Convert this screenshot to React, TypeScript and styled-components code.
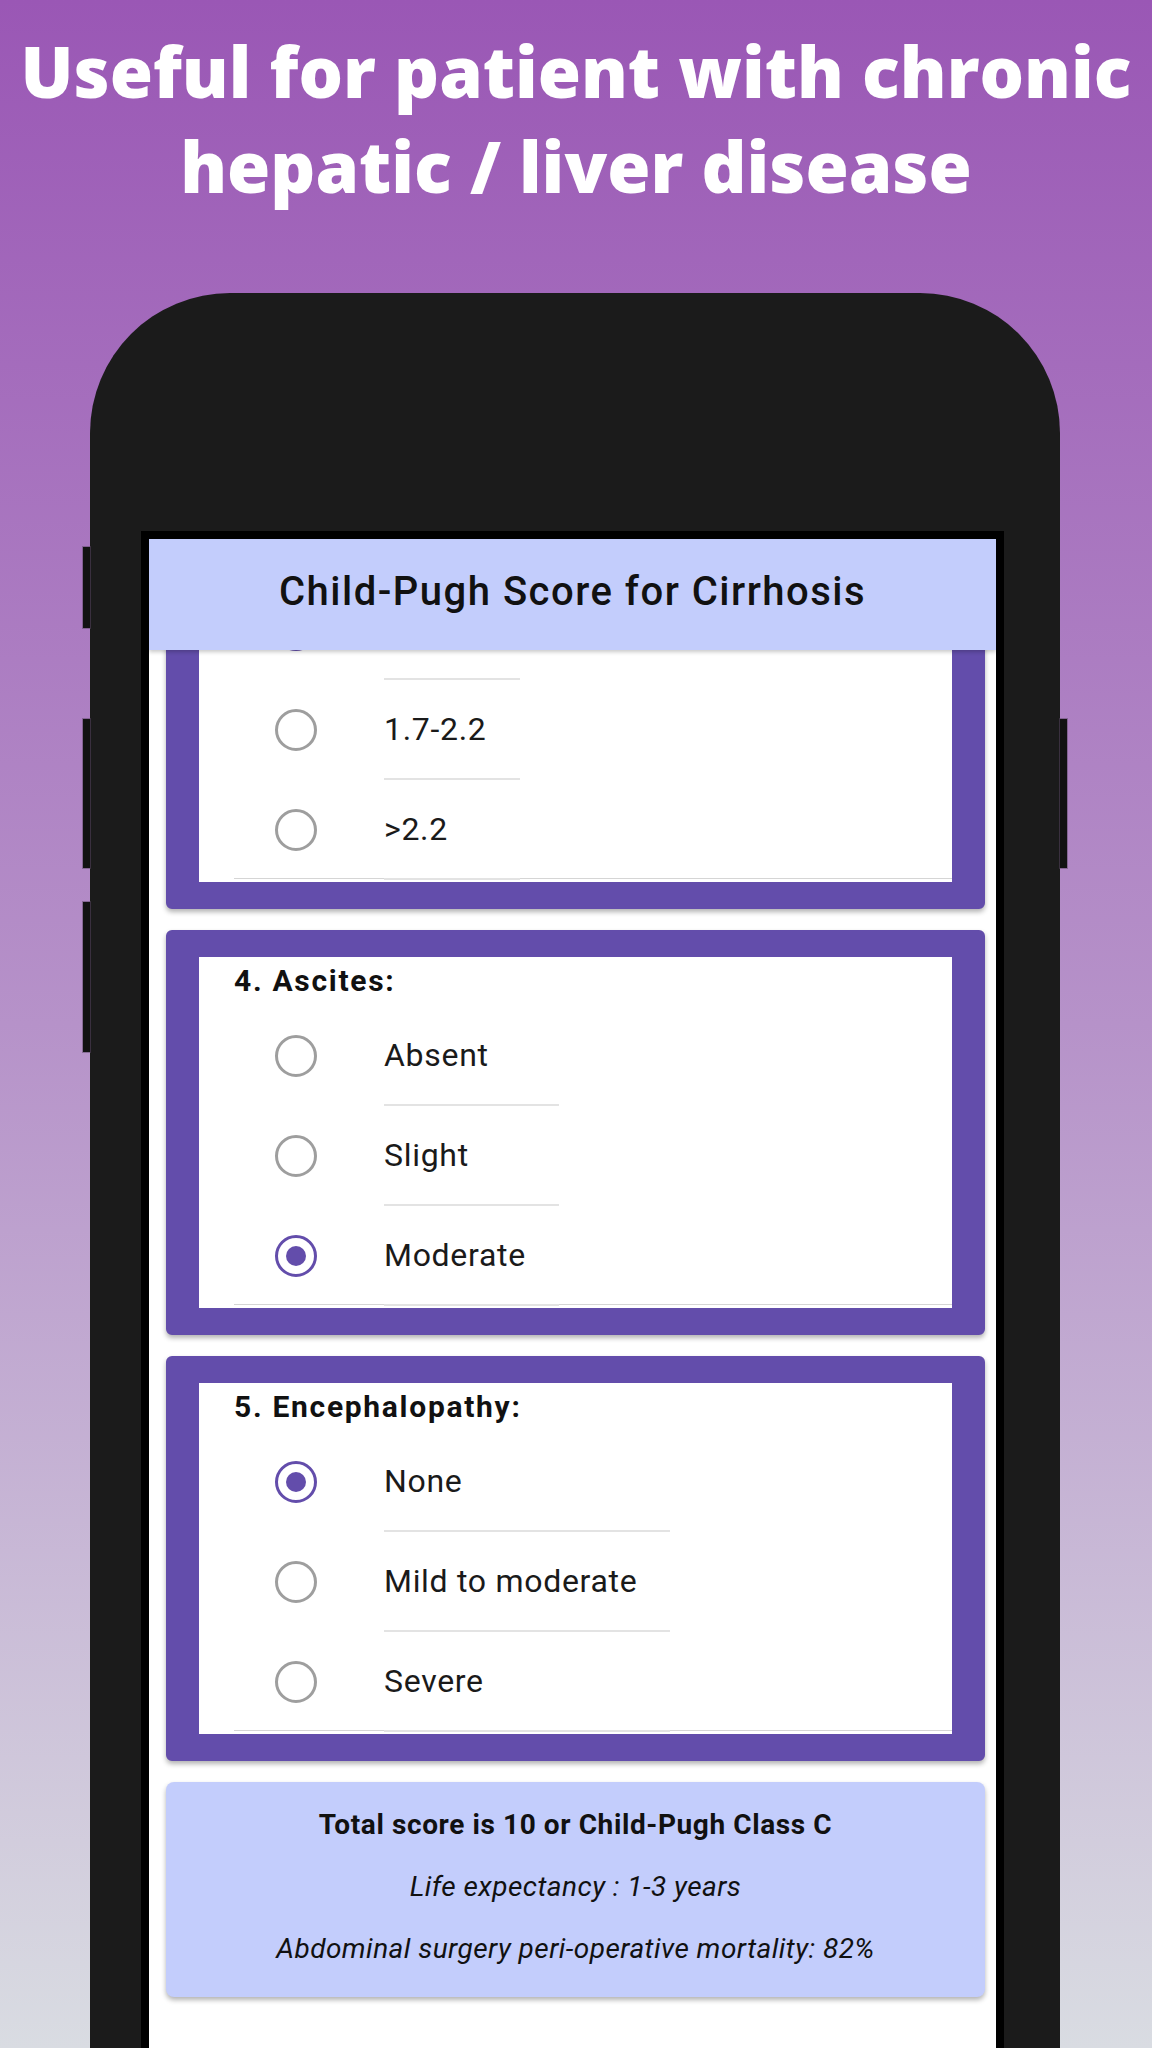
import React from 'react';
import styled, { createGlobalStyle } from 'styled-components';

const GlobalStyle = createGlobalStyle`
  html, body {
    margin: 0;
    padding: 0;
  }
  body {
    font-family: Roboto, "Noto Sans", Arial, sans-serif;
  }
`;

const Page = styled.div`
  width: 1152px;
  height: 2048px;
  overflow: hidden;
  display: flex;
  flex-direction: column;
  background: linear-gradient(180deg, #9a57b5 0%, #b692c9 50%, #d9dce2 100%);
`;

const Headline = styled.h1`
  margin: 0;
  padding: 24px 0 0;
  height: 271px;
  box-sizing: border-box;
  text-align: center;
  color: #fff;
  font-family: 'Open Sans', 'Noto Sans', sans-serif;
  font-weight: 800;
  font-size: 70px;
  line-height: 95px;
`;

const Phone = styled.div`
  position: relative;
  flex: 1;
  margin: 22px 0 0 90px;
  width: 970px;
  box-sizing: border-box;
  padding: 238px 56px 0 51px;
  background: #1b1b1b;
  border-radius: 140px 140px 0 0;
  display: flex;
`;

const SideKey = styled.div<{ $side: 'left' | 'right'; $top: number; $height: number }>`
  position: absolute;
  ${(p) => (p.$side === 'left' ? 'left: -7px;' : 'right: -7px;')}
  top: ${(p) => p.$top}px;
  height: ${(p) => p.$height}px;
  width: 7px;
  background: #121212;
  box-shadow: 0 0 0 1px rgba(90, 70, 100, 0.5);
`;

const Screen = styled.div`
  flex: 1;
  display: flex;
  flex-direction: column;
  border: 8px solid #000;
  border-bottom: none;
  background: #fff;
  overflow: hidden;
`;

const AppBar = styled.div`
  position: relative;
  z-index: 2;
  flex: 0 0 111px;
  display: flex;
  align-items: center;
  justify-content: center;
  padding-bottom: 6px;
  box-sizing: border-box;
  background: #c3cdfc;
  box-shadow: 0 2px 4px rgba(0, 0, 0, 0.22);
  font-size: 40px;
  font-weight: 500;
  letter-spacing: 1.5px;
  color: #111;
`;

// the list is scrolled: the first card sits partly under the app bar
const Scroller = styled.div`
  position: relative;
  z-index: 1;
  flex: 1;
  overflow: hidden;
  padding: 0 11px 0 17px;
`;

const List = styled.div`
  margin-top: -146px;
  display: flex;
  flex-direction: column;
  gap: 21px;
`;

const Card = styled.section`
  border: solid #634dab;
  border-width: 27px 33px;
  border-radius: 6px;
  background: #fff;
  box-shadow: 0 3px 5px rgba(0, 0, 0, 0.3);
`;

const CardBody = styled.div`
  padding: 4px 0 3px 35px;
`;

const Question = styled.h3`
  margin: 0;
  height: 40px;
  font-size: 30px;
  line-height: 40px;
  font-weight: 700;
  letter-spacing: 1.7px;
  color: #111;
`;

const Options = styled.div`
  margin-top: 5px;
  display: inline-grid;
  grid-template-columns: 42px max-content;
  column-gap: 67px;
  padding-left: 41px;
`;

const RadioCell = styled.div`
  height: 100px;
  box-sizing: border-box;
  padding-bottom: 1px;
  display: flex;
  align-items: center;
`;

const Radio = styled.span<{ $checked?: boolean }>`
  width: 42px;
  height: 42px;
  box-sizing: border-box;
  border-radius: 50%;
  border: 3.5px solid ${(p) => (p.$checked ? '#634dab' : '#9e9e9e')};
  display: flex;
  align-items: center;
  justify-content: center;

  &::after {
    content: '';
    display: ${(p) => (p.$checked ? 'block' : 'none')};
    width: 20px;
    height: 20px;
    border-radius: 50%;
    background: #634dab;
  }
`;

const Label = styled.div`
  height: 100px;
  box-sizing: border-box;
  padding: 0 33px 1px 0;
  display: flex;
  align-items: center;
  border-bottom: 2px solid #e3e3e3;
  font-size: 32px;
  letter-spacing: 0.7px;
  color: #1a1a1a;
`;

const BottomEdge = styled.div`
  height: 1px;
  background: #d5d5d5;
  margin-top: -2px;
`;

const Result = styled.section`
  margin-bottom: 40px;
  padding: 12px 16px 17px;
  border-radius: 8px;
  background: #c3cdfc;
  box-shadow: 0 3px 5px rgba(0, 0, 0, 0.3);
  text-align: center;
  color: #111;
  font-size: 28px;
  line-height: 62px;
`;

const ResultTitle = styled.div`
  font-weight: 700;
  letter-spacing: 0.6px;
`;

const ResultNote = styled.div`
  font-style: italic;
  letter-spacing: 0.45px;
`;

type QuestionData = { title: string; options: string[]; selected: number };

const questions: QuestionData[] = [
  { title: '3. Prothrombin time (INR):', options: ['<1.7', '1.7-2.2', '>2.2'], selected: 0 },
  { title: '4. Ascites:', options: ['Absent', 'Slight', 'Moderate'], selected: 2 },
  { title: '5. Encephalopathy:', options: ['None', 'Mild to moderate', 'Severe'], selected: 0 },
];

const QuestionCard = ({ q }: { q: QuestionData }) => (
  <Card>
    <CardBody>
      <Question>{q.title}</Question>
      <Options>
        {q.options.map((o, i) => (
          <React.Fragment key={o}>
            <RadioCell>
              <Radio $checked={i === q.selected} />
            </RadioCell>
            <Label>{o}</Label>
          </React.Fragment>
        ))}
      </Options>
      <BottomEdge />
    </CardBody>
  </Card>
);

export default function App() {
  return (
    <>
      <GlobalStyle />
      <Page>
        <Headline>
          Useful for patient with chronic
          <br />
          hepatic / liver disease
        </Headline>
        <Phone>
          <SideKey $side="left" $top={254} $height={81} />
          <SideKey $side="left" $top={426} $height={149} />
          <SideKey $side="left" $top={609} $height={150} />
          <SideKey $side="right" $top={426} $height={149} />
          <Screen>
            <AppBar>Child-Pugh Score for Cirrhosis</AppBar>
            <Scroller>
              <List>
                {questions.map((q) => (
                  <QuestionCard key={q.title} q={q} />
                ))}
                <Result>
                  <ResultTitle>Total score is 10 or Child-Pugh Class C</ResultTitle>
                  <ResultNote>Life expectancy : 1-3 years</ResultNote>
                  <ResultNote>Abdominal surgery peri-operative mortality: 82%</ResultNote>
                </Result>
              </List>
            </Scroller>
          </Screen>
        </Phone>
      </Page>
    </>
  );
}
